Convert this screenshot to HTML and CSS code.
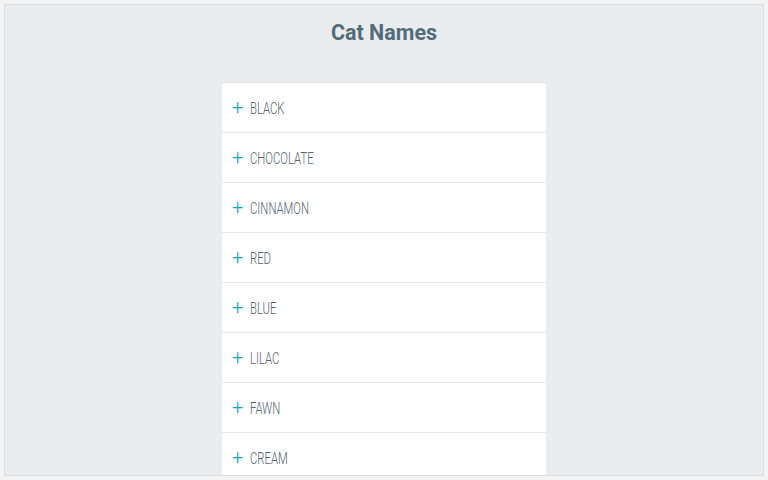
FILE: index.html
```html
<!DOCTYPE html>
<html>
<head>
<meta charset="utf-8">
<link rel="stylesheet" href="styles.css">
</head>
<body>
<div class="frame">
  <h1 class="title">Cat Names</h1>
  <ul class="list">
    <li class="item"><span class="plus">+</span><span class="name">BLACK</span></li>
    <li class="item"><span class="plus">+</span><span class="name">CHOCOLATE</span></li>
    <li class="item"><span class="plus">+</span><span class="name">CINNAMON</span></li>
    <li class="item"><span class="plus">+</span><span class="name">RED</span></li>
    <li class="item"><span class="plus">+</span><span class="name">BLUE</span></li>
    <li class="item"><span class="plus">+</span><span class="name">LILAC</span></li>
    <li class="item"><span class="plus">+</span><span class="name">FAWN</span></li>
    <li class="item"><span class="plus">+</span><span class="name">CREAM</span></li>
  </ul>
</div>
</body>
</html>
```
FILE: styles.css
```css
html, body {
  margin: 0;
  padding: 0;
  background: #f4f4f4;
}
body {
  padding: 4px;
  height: 480px;
  box-sizing: border-box;
  overflow: hidden;
}
.frame {
  height: 472px;
  box-sizing: border-box;
  border: 1px solid #dcdfe1;
  background: #e9edf0;
  overflow: hidden;
}
.title {
  margin: 0;
  padding-top: 14px;
  line-height: 28px;
  font-family: Roboto, "Liberation Sans", sans-serif;
  font-weight: 700;
  font-size: 21.5px;
  color: #546b78;
  text-align: center;
}
.list {
  list-style: none;
  margin: 35px auto 0;
  padding: 0;
  width: 324px;
  background: #fff;
  border-top: 1px solid #dde1e4;
}
.item {
  display: flex;
  align-items: center;
  height: 49px;
  border-bottom: 1px solid #e6e8ea;
  padding-left: 10px;
}
.plus {
  color: #14a3b8;
  font-family: Roboto, sans-serif;
  font-weight: 300;
  font-size: 20px;
  width: 18px;
  line-height: 1;
  margin-top: -1px;
}
.name {
  display: inline-block;
  font-family: Roboto, sans-serif;
  font-weight: 300;
  font-size: 17px;
  color: #56636c;
  margin-top: 1px;
  transform: scaleX(0.665);
  transform-origin: left center;
}
```
